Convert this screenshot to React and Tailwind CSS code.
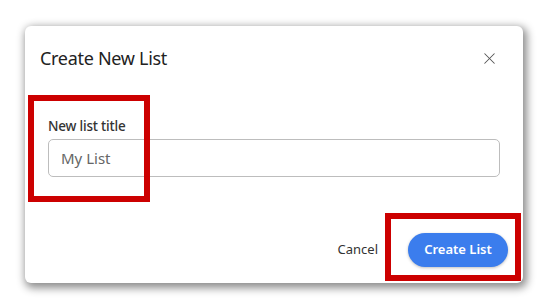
import { X } from "lucide-react";

export default function App() {
    return (
        <div className="relative w-[550px] h-[306px] bg-white overflow-hidden pt-[26px] pl-[25px]" style={{ fontFamily: '"Noto Sans", "Open Sans", sans-serif' }}>
            {/* dialog card */}
            <div className="w-[498px] h-[257px] bg-white rounded-[6px] shadow-[2px_3px_9px_2px_rgba(0,0,0,0.45)] flex flex-col">
                <div className="flex items-center justify-between pl-[15px] pr-[24px] h-[64px]">
                    <h2 className="text-[18px] text-[#222] tracking-[-0.3px]">Create New List</h2>
                    <X className="w-[19px] h-[19px] text-[#555]" strokeWidth={1.3} />
                </div>

                <div className="px-[23px] pt-[26px]">
                    <label className="block text-[13.5px] font-medium text-[#333] mb-[3px] tracking-[-0.2px]">New list title</label>
                    <input
                        defaultValue="My List"
                        className="w-full h-[38px] border border-[#bdbdbd] rounded-[5px] px-[12px] text-[15px] text-[#666] outline-none"
                    />
                </div>

                <div className="flex-1 flex items-end justify-end gap-[30px] pr-[15px] pb-[16px]">
                    <button className="text-[13px] text-[#333] h-[34px]">Cancel</button>
                    <button className="h-[34px] w-[100px] rounded-full bg-[#3b7ded] text-white text-[13px] font-semibold shadow-[0_1px_3px_rgba(0,0,0,0.25)]">Create List</button>
                </div>
            </div>

            {/* annotation boxes */}
            <div className="absolute left-[28px] top-[95px] w-[122px] h-[107px] border-[6px] border-[#cc0000]" />
            <div className="absolute left-[385px] top-[213px] w-[136px] h-[68px] border-[6px] border-[#cc0000]" />
        </div>
    );
}
